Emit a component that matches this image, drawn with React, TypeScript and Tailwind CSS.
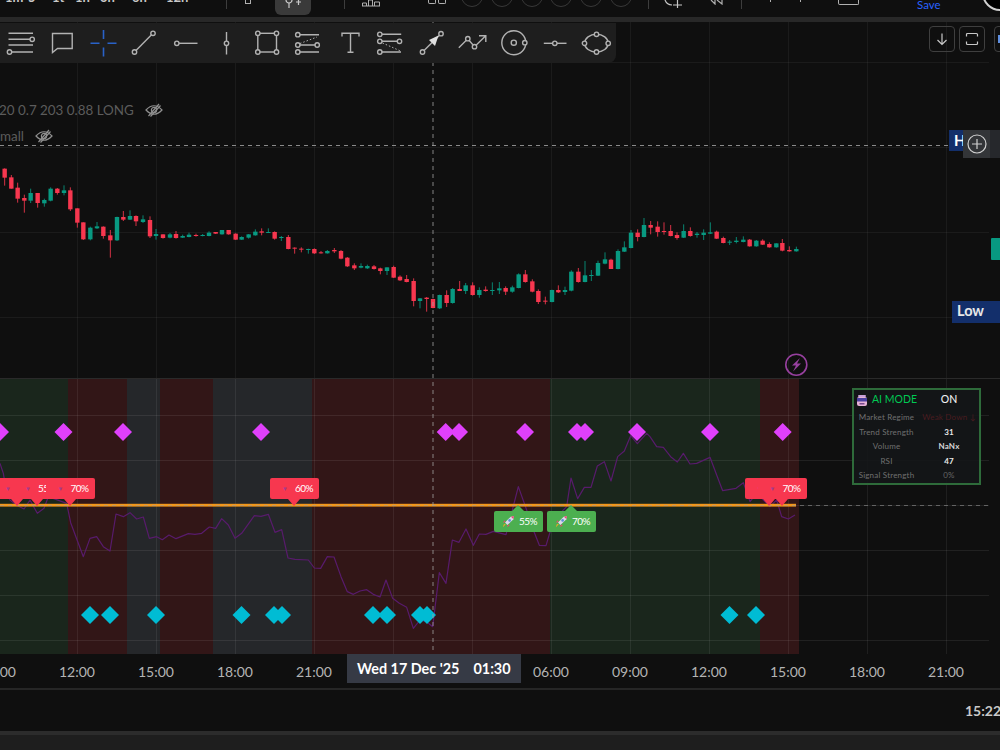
import React from "react";

const RED = "#f7374f";
const GREEN = "#089981";
const A: number[][] = [
[14,25,26,53,77,1],[34,45,52,86,86,1],[53,68,83,116,128,1],[73,104,114,122,158,1],[92,86,99,122,129,0],[113,99,99,129,143,1],[133,116,120,130,140,0],[152,82,86,122,124,0],[172,84,86,99,104,1],[192,76,91,99,106,0],[211,82,91,148,153,1],[232,145,145,188,203,1],[250,187,187,238,240,1],[271,200,203,238,241,0],[291,186,199,205,207,0],[310,199,200,228,236,1],[331,210,226,241,293,1],[351,170,171,241,243,0],[370,153,171,179,183,1],[390,151,168,179,180,0],[408,166,168,184,198,1],[429,166,178,186,189,0],[450,169,180,229,234,1],[468,207,222,228,239,0],[489,223,223,234,236,1],[510,219,223,233,235,0],[528,213,222,234,236,1],[548,224,228,233,234,0],[567,218,224,231,232,0],[588,221,225,228,230,1],[608,222,225,228,229,0],[627,214,218,228,229,0],[647,216,216,221,222,1],[666,210,210,223,224,0],[686,210,210,223,224,1],[707,220,221,239,240,1],[725,229,231,239,240,0],[746,222,223,233,236,0],[766,208,215,226,227,0],[785,205,214,218,226,1],[805,205,216,218,219,0],[824,214,216,236,239,1],[844,228,231,234,243,0],[865,225,231,267,268,1],[884,262,263,266,281,1],[904,262,266,269,277,1],[925,266,267,270,281,0],[943,265,267,280,282,1],[963,273,277,280,281,1],[982,270,273,280,281,0],
];
const B: number[][] = [
[13,114,120,124,129,1],[33,120,123,146,148,1],[52,141,143,169,171,1],[73,160,166,175,180,1],[93,160,168,173,175,0],[112,164,168,175,177,0],[132,165,169,177,179,1],[151,173,175,183,193,1],[171,172,172,183,195,0],[191,167,171,203,204,1],[210,196,200,211,213,1],[230,195,207,216,217,1],[251,205,213,273,289,1],[270,264,265,273,295,0],[290,261,263,267,305,1],[309,266,267,294,295,1],[329,254,255,295,297,0],[350,241,255,279,291,1],[368,234,237,279,281,0],[389,213,237,243,243,1],[407,219,226,243,252,0],[428,217,226,255,257,1],[448,232,240,255,263,0],[467,229,239,243,245,1],[487,217,240,241,255,0],[508,216,235,241,252,0],[527,229,234,245,255,1],[547,227,232,245,248,0],[566,190,193,234,235,0],[586,180,193,216,218,1],[607,208,214,245,247,1],[625,238,243,276,282,1],[646,260,272,275,283,1],[666,239,240,276,277,0],[685,226,240,247,249,1],[705,230,240,246,255,0],[724,181,185,242,244,0],[745,174,185,216,218,1],[765,153,196,216,217,0],[784,180,195,197,213,0],[804,152,159,197,198,0],[825,127,148,161,163,0],[843,146,149,177,177,1],[864,118,123,177,178,0],[883,94,112,125,126,0],[903,60,68,114,115,0],[923,58,68,81,94,1],[942,24,45,81,82,0],[962,33,45,53,73,1],[983,34,50,66,80,1],
];
const C: number[][] = [
[192,37,63,65,74,1],[212,45,63,78,79,1],[231,67,75,84,89,1],[251,43,63,83,84,0],[271,52,63,78,80,1],[291,66,71,75,83,0],[311,58,68,75,90,0],[331,37,67,71,72,0],[350,62,65,86,87,1],[370,80,84,99,100,1],[389,90,95,98,105,0],[409,81,92,96,100,0],[430,79,89,96,97,0],[449,87,89,109,110,1],[469,90,92,109,110,0],[488,88,92,104,105,1],[508,97,102,112,113,1],[529,100,100,112,113,0],[547,87,99,122,124,1],[568,109,120,124,125,1],[589,110,117,124,125,0],
];
const candles = [
  ...A.map((c) => ({ c, ox: 0, oy: 160 })),
  ...B.map((c) => ({ c, ox: 330, oy: 210 })),
  ...C.map((c) => ({ c, ox: 600, oy: 210 })),
];

const L1 = [[0,190],[10,220],[20,280],[30,300],[50,316],[72,327],[90,300],[112,340],[132,325],[145,290],[200,310],[212,368],[250,470],[270,415],[290,410],[310,440],[330,453],[348,342],[370,350],[390,338],[410,357],[430,351],[448,415],[470,410],[487,419],[507,405],[528,416],[565,401],[585,403],[605,400],[628,381],[647,385],[665,356],[685,375],[705,415],[725,400],[763,347],[783,349],[805,343],[825,397],[845,389],[864,474],[885,478],[925,480],[943,504],[962,505],[982,470]];
const L2 = [[12,471],[33,530],[52,575],[70,583],[90,573],[110,569],[130,583],[150,591],[168,540],[188,595],[208,610],[230,622],[250,685],[270,660],[290,665],[308,680],[328,518],[348,550],[367,420],[387,427],[408,387],[430,436],[448,402],[468,403],[490,394],[528,404],[565,260],[590,330],[610,390],[628,436],[648,437],[665,380],[690,340],[710,320],[723,234],[743,296],[763,262],[783,262],[802,198],[823,185],[843,243],[863,170],[883,153]];
const L3 = [[92,107],[112,131],[140,100],[150,110],[170,140],[190,142],[212,170],[232,186],[250,160],[270,192],[290,190],[330,172],[350,225],[368,272],[408,265],[430,248],[450,305],[470,280],[510,320],[530,300],[545,350],[565,357],[585,345]];
const linePts = [
  ...L1.map(([x, y]) => `${x / 3},${400 + y / 3}`),
  ...L2.map(([x, y]) => `${330 + x / 3},${400 + y / 3}`),
  ...L3.map(([x, y]) => `${600 + x / 3},${400 + y / 3}`),
].join(" ");

const magenta = [0, 63.5, 123, 261, 445.7, 459, 525, 577, 585, 637, 710, 782.7];
const cyan = [90, 110, 156, 241.5, 274, 282, 373, 387, 420, 427, 729.5, 756];
const vGrid = Array.from({ length: 12 }, (_, i) => 77.5 + 79 * i).concat([-1.5]);
const hTop = [62.5, 147.5, 232.5, 317.5];
const hLow = [415.5, 460.5, 505.5, 550.5, 595.5, 640.5];
const times = ["09:00", "12:00", "15:00", "18:00", "21:00", "00:00", "03:00", "06:00", "09:00", "12:00", "15:00", "18:00", "21:00"];

function Tool({ children }: { children: React.ReactNode }) {
  return (
    <div className="flex w-[41px] items-center justify-center">
      <svg width="28" height="28" viewBox="0 0 28 28" fill="none" stroke="#b2b2b2" strokeWidth="1.4" className="overflow-visible">
        {children}
      </svg>
    </div>
  );
}
const Dot = ({ x, y, r = 2.2 }: { x: number; y: number; r?: number }) => <circle cx={x} cy={y} r={r} fill="#1e1e1e" />;

function Toolbar() {
  return (
    <div className="absolute left-0 top-[1px] flex h-[40px] w-[616px] rounded-br-lg bg-[#1e1e1e]">
      <Tool>
        <path d="M1.5 4.3H26M1.5 10.3H23M1.5 16H26M5 23H26" /><Dot x={25.2} y={10.3} /><Dot x={2.5} y={23} />
      </Tool>
      <Tool><path d="M4.5 23.5V4.5H24.2V19.5H9.5Z" /></Tool>
      <Tool><path d="M1.5 14.3H10.5M18.5 14.3H27.5M14.5 1V10M14.5 18.5V27.5" stroke="#2962c8" strokeWidth="1.6" /></Tool>
      <Tool><path d="M4.5 23L23 4.3" /><Dot x={4.5} y={23} /><Dot x={23} y={4.3} /></Tool>
      <Tool><path d="M6 14.3H26.5" /><Dot x={5.8} y={14.3} /></Tool>
      <Tool><path d="M14.5 3V25.5" /><Dot x={14.5} y={14.3} /></Tool>
      <Tool>
        <rect x="4.8" y="4.3" width="18.7" height="18.7" /><Dot x={4.8} y={4.3} /><Dot x={23.5} y={4.3} /><Dot x={4.8} y={23} /><Dot x={23.5} y={23} />
      </Tool>
      <Tool>
        <path d="M4 5.7H25M4 16H23M4 23H25" /><path d="M6 14.5L23 8" strokeDasharray="1.5 2" strokeWidth="1" /><Dot x={3.8} y={5.7} /><Dot x={3.8} y={16} /><Dot x={23.2} y={16} /><Dot x={3.8} y={23} />
      </Tool>
      <Tool><path d="M7 7.5V4.3H24V7.5M15.5 4.3V23.3M12.5 23.3H18.5" /></Tool>
      <Tool>
        <path d="M4 5.3H25.2M4 12.3H23.5M4 23H25" /><path d="M6.5 14L24.5 22" strokeDasharray="1.5 2" strokeWidth="1" /><Dot x={3.8} y={5.3} /><Dot x={3.8} y={12.3} /><Dot x={23.5} y={12.3} /><Dot x={3.8} y={23} />
      </Tool>
      <Tool>
        <path d="M5.5 23L24 4.7" /><path d="M21.5 6.5L12 11L18 17Z" fill="#e0e0e0" stroke="none" /><Dot x={5.5} y={23} /><Dot x={24} y={4.7} />
      </Tool>
      <Tool>
        <path d="M0.8 18.7L9.8 9.7L16.5 17.7L27.5 7M21 6.7H27.8V13" /><Dot x={9.8} y={9.7} /><Dot x={16.5} y={17.7} />
      </Tool>
      <Tool><circle cx="14.8" cy="13.7" r="12" /><circle cx="14.8" cy="13.7" r="2.6" /><Dot x={25.8} y={13.7} /></Tool>
      <Tool><path d="M3.8 14.3H26.5" /><Dot x={14.8} y={14.3} /></Tool>
      <Tool><ellipse cx="15.4" cy="14.2" rx="11.8" ry="9" /><Dot x={15.5} y={5.3} /><Dot x={27.2} y={14.3} /><Dot x={15.5} y={23} /><Dot x={3.5} y={14.3} /></Tool>
    </div>
  );
}

function EyeOff() {
  return (
    <svg width="18" height="14" viewBox="0 0 18 14" fill="none" stroke="#8f8f8f" strokeWidth="1.2">
      <path d="M1 7Q9 -1.5 17 7Q9 15.5 1 7Z" /><circle cx="9" cy="7" r="2.6" /><path d="M3.5 13L14 1M5.5 13.5L15.5 2.5" />
    </svg>
  );
}

function RedTag({ pos, text }: { pos: string; text: string }) {
  return (
    <div className={`absolute top-[456px] flex h-[21px] w-[49px] items-center rounded-[2px] bg-[#f7374f] text-[10px] tracking-[-0.5px] text-white ${pos}`}>
      <span className="ml-[12px] w-[13px] text-[6px] text-[#a63a8c]">▼</span>
      <span>{text}</span>
      <div className="absolute left-[18px] top-full border-x-[6px] border-t-[7px] border-x-transparent border-t-[#f7374f]" />
    </div>
  );
}

function Rocket() {
  return (
    <svg width="13" height="13" viewBox="0 0 12 12" className="ml-[8px] mr-[4px]">
      <path d="M2.8 7L8 1.5L11 1L10.5 4L5 9.2Z" fill="#dcd8ec" />
      <path d="M8.2 1.5L11 1L10.5 3.8Z" fill="#e8476f" />
      <circle cx="7" cy="5" r="1.2" fill="#5a8fd8" />
      <path d="M3.2 6.5L0.8 7.2L2.5 4.8ZM5.5 8.8L4.8 11.2L7.2 9.5Z" fill="#e8476f" />
      <path d="M3.5 8.5L0.8 11.2L1.8 8.2Z" fill="#f5a623" />
    </svg>
  );
}

function GreenTag({ pos, text }: { pos: string; text: string }) {
  return (
    <div className={`absolute top-[489px] flex h-[21px] w-[49px] items-center rounded-[2px] bg-[#4caf50] text-[10px] tracking-[-0.5px] text-white ${pos}`}>
      <div className="absolute left-[18px] bottom-full border-x-[6px] border-b-[6px] border-x-transparent border-b-[#4caf50]" />
      <Rocket />
      <span>{text}</span>
    </div>
  );
}

function Robot() {
  return (
    <svg width="12" height="13" viewBox="0 0 12 13" className="mr-[4px]">
      <rect x="2" y="1" width="8" height="2" rx="1" fill="#c9a0d8" />
      <rect x="1" y="3" width="10" height="9" rx="2" fill="#e6b3d6" />
      <rect x="1" y="4" width="10" height="3.5" fill="#4a3f9e" />
      <rect x="3.5" y="9" width="5" height="1.5" fill="#7a4a8e" />
    </svg>
  );
}

function PanelRow({ label, value, valueCls }: { label: string; value: string; valueCls: string }) {
  return (
    <div className="flex h-[14.5px] items-center text-[8px] tracking-[0.2px]">
      <div className="w-[65px] text-center text-[#707070]">{label}</div>
      <div className={`w-[60px] text-center ${valueCls}`}>{value}</div>
    </div>
  );
}

export default function App() {
  return (
    <div className="flex h-[750px] w-[1000px] flex-col overflow-hidden bg-[#0f0f0f] font-['Lato',sans-serif]">
      {/* top bar, clipped by the window */}
      <div className="flex h-[17px] shrink-0 items-start overflow-hidden text-[#c8c8c8] [&>*]:shrink-0">
        <div className="-mt-[12px] flex pl-[5px] text-[13px] font-bold">
          <span className="w-[23px]">1m</span><span className="w-[24px]">5</span><span className="w-[23px]">1t</span><span className="w-[25px]">1h</span><span className="w-[32px]">3h</span><span className="w-[34px]">6h</span><span className="w-[34px]">12h</span>
        </div>
        <div className="ml-[26px] h-[9px] w-px bg-[#3d3d3d]" />
        <div className="ml-[18px] h-[4px] w-[6px] border-x border-b border-[#b0b0b0]" />
        <div className="ml-[24px] flex h-[15px] w-[36px] items-start justify-center rounded-b-md bg-[#3a3a3a]">
          <svg width="20" height="8" viewBox="0 0 20 8" fill="none" stroke="#c8c8c8" strokeWidth="1.2"><circle cx="6" cy="0" r="3" /><path d="M6 3V8M13 2H18M15.5 0V5" /></svg>
        </div>
        <div className="ml-[33px] h-[9px] w-px bg-[#3d3d3d]" />
        <svg width="20" height="7" viewBox="0 0 20 7" fill="none" stroke="#b0b0b0" className="ml-[16px]"><path d="M1 6H19M1.5 6V3H5.5V6M7.5 6V0H11.5V6M13.5 6V2H18.5V6" /></svg>
        <div className="ml-[47px] flex gap-[2px]">
          <div className="h-[4px] w-[8px] rounded-b-[2px] border-x border-b border-[#b0b0b0]" /><div className="h-[4px] w-[8px] rounded-b-[2px] border-x border-b border-[#b0b0b0]" />
        </div>
        <div className="ml-[15px] flex gap-[7.8px]">
          {[0, 1, 2, 3, 4, 5].map((i) => <div key={i} className="-mt-[15px] h-[22px] w-[22px] rounded-full border border-[#383838]" />)}
        </div>
        <div className="ml-[16px] h-[9px] w-px bg-[#3d3d3d]" />
        <svg width="22" height="8" viewBox="0 0 22 8" fill="none" stroke="#c8c8c8" strokeWidth="1.2" className="ml-[15px]"><path d="M1 0Q3 5 8 5M9 5H18M13.5 0V8" /></svg>
        <svg width="14" height="5" viewBox="0 0 14 5" fill="none" stroke="#b0b0b0" strokeWidth="1.2" className="ml-[24px]"><path d="M1 0L5 4V0M7 0L12 4V0" /></svg>
        <div className="ml-[17px] h-[9px] w-px bg-[#3d3d3d]" />
        <div className="ml-[28px] h-[2px] w-px bg-[#b0b0b0]" />
        <div className="ml-[29px] h-[2px] w-px bg-[#b0b0b0]" />
        <div className="ml-[37px] h-[5px] w-[21px] rounded-b-[2px] border-x border-b border-[#b0b0b0]" />
        <span className="-mt-[2px] ml-[58px] text-[11.5px] leading-[14px] text-[#2962ff]">Save</span>
        <div className="-mt-[25px] ml-[41px] h-[36px] w-[36px] rounded-full border-2 border-[#d0d0d0] bg-black" />
      </div>
      <div className="h-[5px] shrink-0 bg-[#282828]" />

      {/* chart */}
      <div className="relative flex h-[666px] shrink-0 flex-col">
        <div className="h-[357px] border-b border-[#2a2a2a]" />
        <div className="flex h-[275px]">
          <div className="w-[67.5px] bg-[#1a261c]" />
          <div className="w-[59.5px] bg-[#321617]" />
          <div className="w-[33px] bg-[#25272a]" />
          <div className="w-[53px] bg-[#321617]" />
          <div className="w-[98.5px] bg-[#25272a]" />
          <div className="w-[238.5px] bg-[#321617]" />
          <div className="w-[210px] bg-[#1a261c]" />
          <div className="w-[39px] bg-[#321617]" />
        </div>
        <div className="flex h-[34px] items-center overflow-hidden text-[14px] text-[#b4b4b4]">
          {times.map((t, i) => (
            <span key={i} className={`w-[79px] shrink-0 text-center ${i === 0 ? "-ml-[41.5px]" : ""}`}>{t}</span>
          ))}
        </div>

        <svg className="absolute inset-0" width="1000" height="666" viewBox="0 22 1000 666" fill="none">
          {vGrid.map((x) => <line key={"a" + x} x1={x} x2={x} y1={22} y2={378} stroke="#fff" strokeOpacity="0.05" />)}
          {vGrid.map((x) => <line key={"b" + x} x1={x} x2={x} y1={379} y2={654} stroke="#fff" strokeOpacity="0.07" />)}
          {hTop.map((y) => <line key={y} x1={0} x2={989} y1={y} y2={y} stroke="#fff" strokeOpacity="0.05" />)}
          {hLow.map((y) => <line key={y} x1={0} x2={989} y1={y} y2={y} stroke="#fff" strokeOpacity="0.08" />)}

          {candles.map(({ c, ox, oy }, i) => {
            const [zx, wt, bt, bb, wb, red] = c;
            const x = ox + zx / 3;
            const col = red ? RED : GREEN;
            return (
              <g key={i}>
                <line x1={x} x2={x} y1={oy + wt / 3} y2={oy + wb / 3} stroke={col} strokeOpacity="0.85" />
                <rect x={x - 2.2} y={oy + bt / 3} width={4.4} height={Math.max((bb - bt) / 3, 1)} fill={col} />
              </g>
            );
          })}

          <polyline points={linePts} stroke="#581b6c" strokeWidth="1.2" strokeLinejoin="round" />
          <rect x={0} y={503.8} width={796} height={2.8} fill="#f2971c" />
          <line x1={0} x2={990} y1={505.5} y2={505.5} stroke="#9a9a9a" strokeOpacity="0.55" strokeDasharray="4 4" />

          {magenta.map((x) => <polygon key={x} points={`${x - 9},432 ${x},423 ${x + 9},432 ${x},441`} fill="#e040fb" />)}
          {cyan.map((x) => <polygon key={x} points={`${x - 9},615 ${x},606 ${x + 9},615 ${x},624`} fill="#00bcd4" />)}

          <line x1={433} x2={433} y1={22} y2={654} stroke="#a0a0a0" strokeOpacity="0.8" strokeDasharray="4 4" />
          <line x1={0} x2={950} y1={145.5} y2={145.5} stroke="#a0a0a0" strokeOpacity="0.85" strokeDasharray="4 4" />

          <circle cx={796.3} cy={364.7} r={10.5} stroke="#97409f" strokeWidth="1.6" />
          <path d="M800 358L792 365.5H796L793 371.5L801 363.5H797Z" fill="#97409f" />
        </svg>

        <Toolbar />

        {/* legend */}
        <div className="absolute left-0 top-[79px] flex h-[18px] items-center gap-[11px] text-[13.4px] text-[#5c5c5c]">
          <span className="-ml-[1px]">20 0.7 203 0.88 LONG</span><EyeOff />
        </div>
        <div className="absolute left-0 top-[105px] flex h-[18px] items-center gap-[11px] text-[13.4px] text-[#5c5c5c]">
          <span>mall</span><EyeOff />
        </div>

        {/* chart corner buttons */}
        <div className="absolute left-[929px] top-[4px] flex gap-[4px]">
          <div className="flex h-[26px] w-[26px] items-center justify-center rounded-[4px] border border-[#3f3f3f]">
            <svg width="14" height="14" viewBox="0 0 14 14" fill="none" stroke="#c8c8c8" strokeWidth="1.2"><path d="M7 1.5V12.5M2.5 8L7 12.5L11.5 8" /></svg>
          </div>
          <div className="flex h-[26px] w-[26px] items-center justify-center rounded-[4px] border border-[#3f3f3f]">
            <svg width="14" height="14" viewBox="0 0 14 14" fill="none" stroke="#c8c8c8" strokeWidth="1.2"><path d="M1.5 4.5V2.5Q1.5 1.5 2.5 1.5H11.5Q12.5 1.5 12.5 2.5V4.5M1.5 9.5V11.5Q1.5 12.5 2.5 12.5H11.5Q12.5 12.5 12.5 11.5V9.5" /></svg>
          </div>
          <div className="ml-[5px] flex h-[26px] w-[26px] items-center rounded-[4px] border border-[#3f3f3f] pl-[3px]">
            <div className="h-[8px] w-[3px] bg-[#5f8fe0]" />
          </div>
        </div>

        {/* price scale tags */}
        <div className="absolute left-[949px] top-[108px] flex h-[21px] w-[51px] bg-[#132f6b] pl-[5px] text-[15px] font-bold leading-[20px] text-white">H</div>
        <div className="absolute left-[963px] top-[108px] flex h-[28px] w-[27px] items-center justify-center bg-[#333538]">
          <svg width="20" height="20" viewBox="0 0 20 20" fill="none" stroke="#d0d0d0" strokeWidth="1.2"><circle cx="10" cy="10" r="9" /><path d="M10 5V15M5 10H15" /></svg>
        </div>
        <div className="absolute left-[990px] top-[108px] h-[28px] w-[10px] bg-[#26282c]" />
        <div className="absolute left-[990.5px] top-[216px] h-[22px] w-[10px] rounded-l-[1px] bg-[#089981]" />
        <div className="absolute left-[952px] top-[279px] flex h-[22px] w-[48px] items-center bg-[#132f6b] pb-[2px] pl-[5px] text-[14.5px] font-bold text-[#e8e8e8]">Low</div>

        {/* signal labels */}
        <RedTag pos="-left-[7px]" text="55%" />
        <RedTag pos="left-[13px]" text="55%" />
        <RedTag pos="left-[45.5px]" text="70%" />
        <RedTag pos="left-[270px]" text="60%" />
        <RedTag pos="left-[744.5px]" text="70%" />
        <RedTag pos="left-[757.5px]" text="70%" />
        <GreenTag pos="left-[494px]" text="55%" />
        <GreenTag pos="left-[547px]" text="70%" />

        {/* AI panel */}
        <div className="absolute left-[852px] top-[366px] h-[97px] w-[129px] border-2 border-[#2e6b3a] bg-[#141618]/90">
          <div className="flex h-[20px] items-center text-[10.5px]">
            <div className="flex w-[65px] items-center justify-center whitespace-nowrap text-[#00c853]"><Robot /><span>AI MODE</span></div>
            <div className="w-[60px] text-center font-medium text-[#f0f0f0]">ON</div>
          </div>
          <PanelRow label="Market Regime" value="Weak Down ↓" valueCls="text-[#4a1c20]" />
          <PanelRow label="Trend Strength" value="31" valueCls="font-bold text-[#e8e8e8]" />
          <PanelRow label="Volume" value="NaNx" valueCls="font-bold text-[#d8d8d8]" />
          <PanelRow label="RSI" value="47" valueCls="font-bold text-[#e8e8e8]" />
          <PanelRow label="Signal Strength" value="0%" valueCls="text-[#666666]" />
        </div>

        {/* crosshair time label */}
        <div className="absolute left-[346.5px] top-[632px] flex h-[29px] w-[174.5px] items-center justify-center gap-[14px] bg-[#363a45] text-[14.4px] font-bold text-white">
          <span>Wed 17 Dec &#39;25</span><span>01:30</span>
        </div>
      </div>

      <div className="h-[2px] shrink-0 bg-[#262626]" />
      <div className="flex h-[41px] shrink-0 items-center overflow-hidden pl-[965px] text-[14px] font-bold text-[#c8c8c8]">
        <span className="whitespace-nowrap">15:22</span>
      </div>
      <div className="h-[4px] shrink-0 bg-[#2c2c2c]" />
      <div className="flex-1 bg-[#1e1e1e]" />
    </div>
  );
}
